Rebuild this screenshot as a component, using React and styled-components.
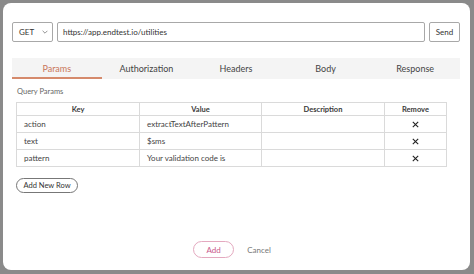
import React from 'react';
import styled, { createGlobalStyle } from 'styled-components';

const Global = createGlobalStyle`
  html, body {
    margin: 0;
    padding: 0;
    background: #8a8a8a;
  }
  * { box-sizing: border-box; }
`;

const Page = styled.div`
  width: 474px;
  height: 274px;
  padding: 3px 4px 4px 3px;
  background: #8a8a8a;
  font-family: Lato, "Open Sans", sans-serif;
  color: #333;
`;

const Modal = styled.div`
  height: 100%;
  background: #fff;
  border-radius: 8px;
  padding: 19px 10px 0 9px;
  display: flex;
  flex-direction: column;
`;

const UrlRow = styled.div`
  display: flex;
  height: 20px;
`;

const Select = styled.div`
  width: 41px;
  border: 1px solid #a8a8a8;
  border-radius: 2px;
  display: flex;
  align-items: center;
  justify-content: space-between;
  padding: 0 4px 0 6px;
  font-size: 8px;
  color: #333;
`;

const UrlInput = styled.div`
  flex: 1;
  margin-left: 4px;
  border: 1px solid #a8a8a8;
  border-radius: 2px;
  display: flex;
  align-items: center;
  padding-left: 5px;
  font-size: 8px;
  color: #333;
`;

const SendButton = styled.div`
  width: 31px;
  margin-left: 4px;
  border: 1px solid #a8a8a8;
  border-radius: 2px;
  display: flex;
  align-items: center;
  justify-content: center;
  font-size: 8px;
  color: #333;
`;

const Tabs = styled.div`
  margin-top: 16px;
  height: 21px;
  background: #f4f4f4;
  display: grid;
  grid-template-columns: repeat(5, 1fr);
`;

const Tab = styled.div`
  display: flex;
  align-items: center;
  justify-content: center;
  font-size: 9px;
  color: ${p => (p.$active ? '#c9765a' : '#444')};
  border-bottom: 2px solid ${p => (p.$active ? '#d58a6c' : 'transparent')};
  padding-top: 2px;
`;

const SectionLabel = styled.div`
  margin-top: 8px;
  margin-left: 5px;
  font-size: 7.5px;
  color: #666;
`;

const Table = styled.table`
  margin-top: 6px;
  margin-left: 4px;
  width: 430px;
  border-collapse: collapse;
  font-size: 8px;
  table-layout: fixed;
`;

const Th = styled.th`
  height: 13px;
  border: 1px solid #dadada;
  font-weight: 700;
  color: #3a3a3a;
  padding: 0;
  text-align: center;
  font-size: 7.5px;
`;

const Td = styled.td`
  height: 17px;
  border: 1px solid #dadada;
  padding: ${p => (p.$center ? '0' : '0 0 0 7px')};
  color: #444;
  text-align: ${p => (p.$center ? 'center' : 'left')};
`;

const AddRowButton = styled.div`
  align-self: flex-start;
  margin-top: 11px;
  margin-left: 4px;
  height: 15px;
  width: 62px;
  border: 1px solid #777;
  border-radius: 8px;
  display: flex;
  align-items: center;
  justify-content: center;
  font-size: 7.5px;
  color: #333;
`;

const Footer = styled.div`
  margin-top: auto;
  margin-bottom: 12px;
  display: flex;
  justify-content: center;
  align-items: center;
  gap: 13px;
  padding-right: 8px;
`;

const AddButton = styled.div`
  width: 41px;
  height: 17px;
  border: 1px solid #e4a9bf;
  border-radius: 9px;
  display: flex;
  align-items: center;
  justify-content: center;
  font-size: 8px;
  color: #c8588a;
`;

const CancelText = styled.div`
  font-size: 8px;
  color: #777;
`;

const Chevron = () => (
  <svg width="6" height="4" viewBox="0 0 6 4">
    <path d="M0.6 0.8 L3 3.2 L5.4 0.8" fill="none" stroke="#777" strokeWidth="0.8" />
  </svg>
);

const Cross = () => (
  <svg width="7" height="7" viewBox="0 0 7 7" style={{ verticalAlign: 'middle' }}>
    <path d="M0.8 0.8 L6.2 6.2 M6.2 0.8 L0.8 6.2" stroke="#222" strokeWidth="1.1" />
  </svg>
);

const rows = [
  ['action', 'extractTextAfterPattern'],
  ['text', '$sms'],
  ['pattern', 'Your validation code is'],
];

const tabs = ['Params', 'Authorization', 'Headers', 'Body', 'Response'];

export default function App() {
  return (
    <Page>
      <Global />
      <Modal>
        <UrlRow>
          <Select>
            GET
            <Chevron />
          </Select>
          <UrlInput>https://app.endtest.io/utilities</UrlInput>
          <SendButton>Send</SendButton>
        </UrlRow>
        <Tabs>
          {tabs.map((t, i) => (
            <Tab key={t} $active={i === 0}>{t}</Tab>
          ))}
        </Tabs>
        <SectionLabel>Query Params</SectionLabel>
        <Table>
          <colgroup>
            <col style={{ width: 123 }} />
            <col style={{ width: 122 }} />
            <col style={{ width: 123 }} />
            <col style={{ width: 62 }} />
          </colgroup>
          <thead>
            <tr>
              <Th>Key</Th>
              <Th>Value</Th>
              <Th>Description</Th>
              <Th>Remove</Th>
            </tr>
          </thead>
          <tbody>
            {rows.map(([k, v]) => (
              <tr key={k}>
                <Td>{k}</Td>
                <Td>{v}</Td>
                <Td />
                <Td $center><Cross /></Td>
              </tr>
            ))}
          </tbody>
        </Table>
        <AddRowButton>Add New Row</AddRowButton>
        <Footer>
          <AddButton>Add</AddButton>
          <CancelText>Cancel</CancelText>
        </Footer>
      </Modal>
    </Page>
  );
}
